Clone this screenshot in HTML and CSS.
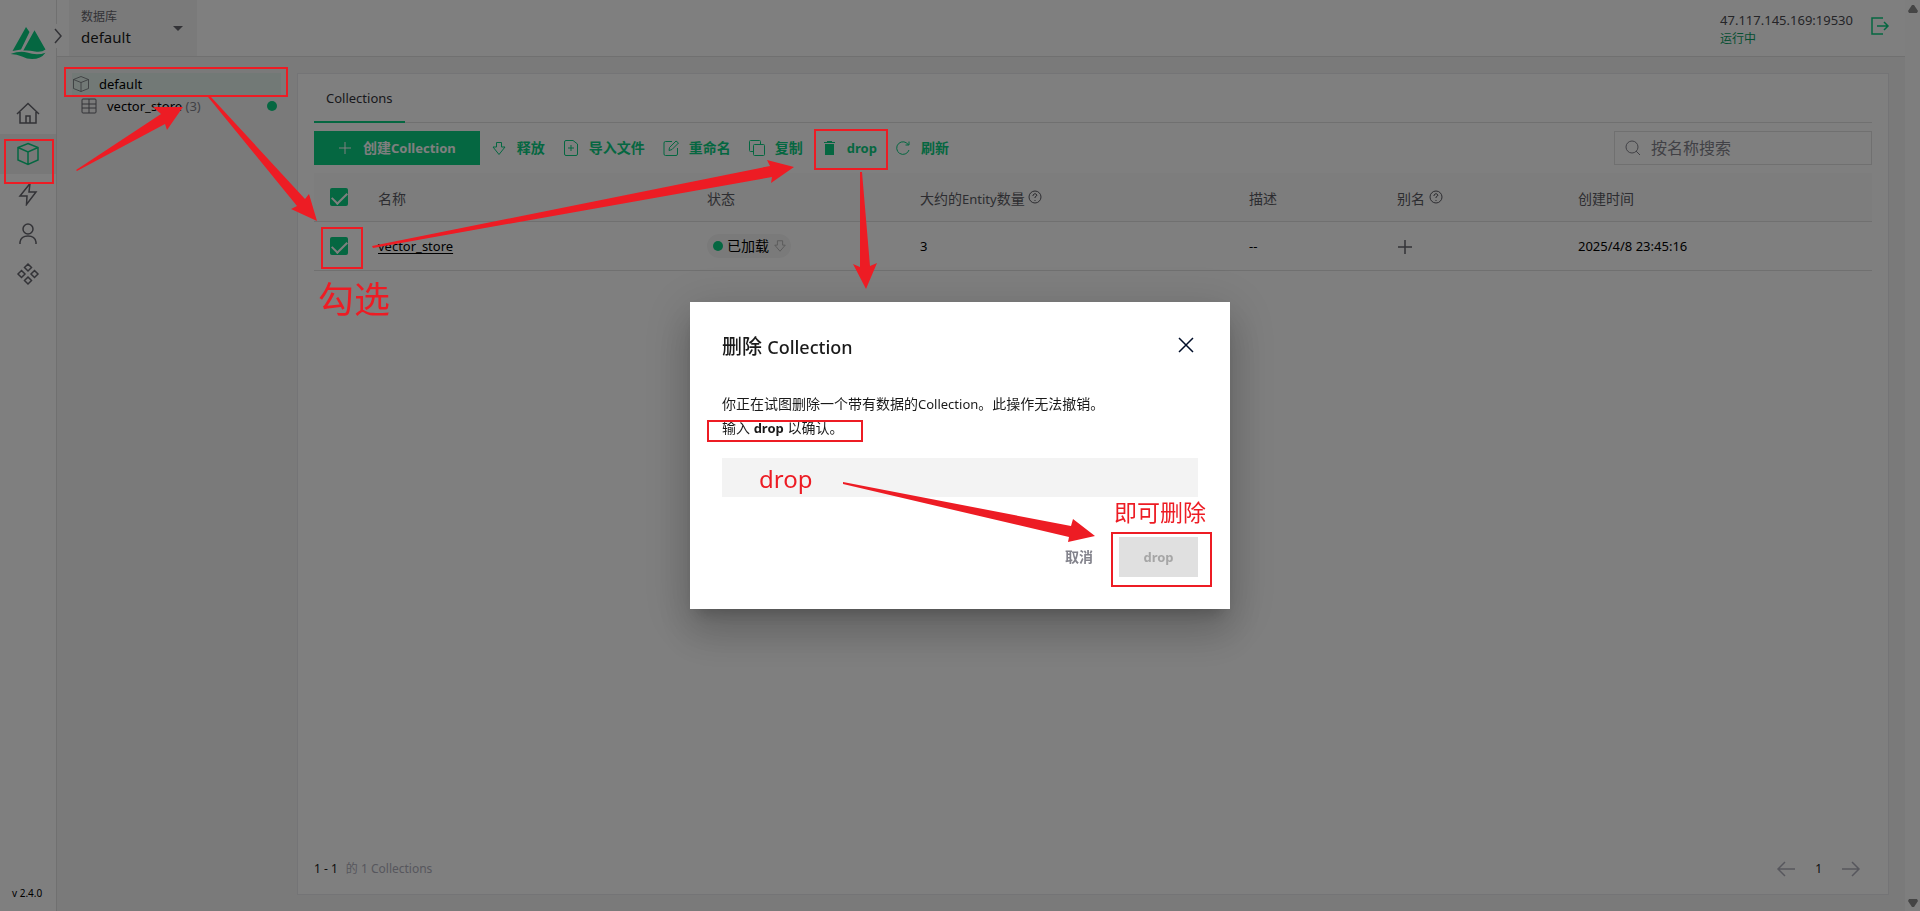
FILE: index.html
```html
<!DOCTYPE html>
<html lang="zh-CN">
<head>
  <meta charset="UTF-8" />
  <meta name="viewport" content="width=device-width, initial-scale=1.0"/>
  <title>Attu - Collections</title>
  <link rel="stylesheet" href="styles.css">
</head>
<body>

  <div class="app">
    <nav class="sidebar">
      <a href="#" class="logo" aria-label="Attu">
        <svg width="36" height="34" viewBox="0 0 36 34"><path d="M16 1 19.500 6 11 23.500Q7 24 2.500 25ZM24.500 4.300 35.500 23.500Q32 26.500 25 25.500 19 24 13.300 24.500ZM.5 28Q10 24.500 17 26.500 27 30 35.500 26.700 31 33 22 33 17 33 12 30.500 7 28 .5 28Z"/></svg>
      </a>
      <button type="button" class="expand" aria-label="展开"><svg width="8" height="16" viewBox="0 0 8 16"><path d="M1 1 7 8 1 15"/></svg></button>
      <a href="#" class="nav-item" aria-label="主页"><svg width="24" height="24" viewBox="0 0 24 24"><path d="M1 12 12 1.500 23 12M4 10V21H20V10M10 21V14H14V21"/></svg></a>
      <a href="#" class="nav-item active" aria-label="数据库"><svg width="24" height="24" viewBox="0 0 24 24"><path d="M12 1.500 22 5.500V18L12 22.500 2 18V5.500ZM2 5.500 12 10 22 5.500M12 10V22"/></svg></a>
      <a href="#" class="nav-item" aria-label="搜索"><svg width="24" height="24" viewBox="0 0 24 24"><path d="M14 1.500 4 14H11L10.500 22.500 20 10H13Z"/></svg></a>
      <a href="#" class="nav-item" aria-label="用户"><svg width="24" height="24" viewBox="0 0 24 24"><circle cx="12" cy="7" r="5"/><path d="M4 22V20Q5 14 12 14 19 14 20 20V22"/></svg></a>
      <a href="#" class="nav-item" aria-label="系统"><svg width="24" height="24" viewBox="0 0 24 24"><path d="M12 2 15.500 5.500 12 9 8.500 5.500ZM12 15 15.500 18.500 12 22 8.500 18.500ZM5.500 8.500 9 12 5.500 15.500 2 12ZM18.500 8.500 22 12 18.500 15.500 15 12Z"/></svg></a>
      <span class="version">v 2.4.0</span>
    </nav>

    <div class="page">
      <header class="header">
        <div class="db-select">
          <label for="db">数据库</label>
          <select id="db"><option>default</option></select>
          <svg class="caret" width="10" height="5" viewBox="0 0 10 5"><path d="M0 0H10L5 5Z"/></svg>
        </div>
        <div class="connection">
          <div class="address">47.117.145.169:19530</div>
          <div class="running">运行中</div>
        </div>
        <button type="button" class="logout" aria-label="退出"><svg width="20" height="20" viewBox="0 0 20 20"><path d="M13 2H2V18H13M7 10H18M14 6 18 10 14 14"/></svg></button>
      </header>

      <div class="content">
        <aside class="tree">
          <a href="#" class="tree-row selected"><svg width="18" height="18" viewBox="0 0 24 24"><path d="M12 2 22 6V18L12 22 2 18V6ZM2 6 12 10 22 6M12 10V22"/></svg><span>default</span></a>
          <a href="#" class="tree-row child"><svg width="18" height="18" viewBox="0 0 18 18"><rect x="2" y="2" width="14" height="14" rx="1"/><path d="M2 7H16M2 11H16M9 2V16"/></svg><span>vector_store <span class="count">(3)</span></span><i class="dot"></i></a>
        </aside>

        <main class="panel">
          <div class="tabs"><button type="button" class="tab">Collections</button></div>

          <div class="toolbar">
            <button type="button" class="create"><svg width="14" height="14" viewBox="0 0 14 14"><path d="M1 7H13M7 1V13"/></svg>创建<span class="en">Collection</span></button>
            <button type="button" class="tool"><svg width="16" height="16" viewBox="0 0 16 16"><path d="M5.500 2.500H10.500V7H14L8 14.500 2 7H5.500Z"/></svg>释放</button>
            <button type="button" class="tool"><svg width="16" height="16" viewBox="0 0 16 16"><path d="M3 .5H10L14.500 4V14Q14.500 15.500 13 15.500H3Q1.500 15.500 1.500 14V2Q1.500 .5 3 .5ZM8 5V11M5 8H11"/></svg>导入文件</button>
            <button type="button" class="tool"><svg width="16" height="16" viewBox="0 0 16 16"><path d="M9 1.500H2.500Q1 1.500 1 3V14Q1 15.500 2.500 15.500H13Q14.500 15.500 14.500 14V8M6 10.500 6.500 7.500 13 1 15.500 3 9 9.500Z"/></svg>重命名</button>
            <button type="button" class="tool"><svg width="16" height="16" viewBox="0 0 16 16"><rect x="4.500" y="4.500" width="11" height="11" rx="1"/><path d="M4 11.500H1.500Q.5 11.500 .5 10.500V1.500Q.5 .5 1.500 .5H10.500Q11.500 .5 11.500 1.500V4"/></svg>复制</button>
            <button type="button" class="tool"><svg width="16" height="16" viewBox="0 0 16 16"><path class="solid" d="M4 4H13V15H4ZM3 2H6V1H11V2H14V3H3Z"/></svg><span class="en">drop</span></button>
            <button type="button" class="tool"><svg width="16" height="16" viewBox="0 0 16 16"><path d="M13.500 5A6.300 6.300 0 1 0 14 10M14 1.500V5H10.500"/></svg>刷新</button>
            <div class="search">
              <svg width="16" height="16" viewBox="0 0 16 16"><circle cx="7" cy="7" r="6"/><path d="M11 11 15 15"/></svg>
              <input type="text" aria-label="按名称搜索" placeholder="按名称搜索">
            </div>
          </div>

          <table>
            <colgroup><col class="c-check"><col class="c-wide"><col class="c-status"><col class="c-wide"><col class="c-alias"><col class="c-desc"><col></colgroup>
            <thead>
              <tr>
                <th><input type="checkbox" class="check" aria-label="全选" checked></th>
                <th>名称</th>
                <th>状态</th>
                <th>大约的<span class="en">Entity</span>数量 <svg class="help" width="14" height="14" viewBox="0 0 14 14"><circle cx="7" cy="7" r="6"/><path d="M5 6V5Q7 2 9 5 9 6 7 7V8M7 10V11"/></svg></th>
                <th>描述</th>
                <th>别名 <svg class="help" width="14" height="14" viewBox="0 0 14 14"><circle cx="7" cy="7" r="6"/><path d="M5 6V5Q7 2 9 5 9 6 7 7V8M7 10V11"/></svg></th>
                <th>创建时间</th>
              </tr>
            </thead>
            <tbody>
              <tr>
                <td><input type="checkbox" class="check" aria-label="vector_store" checked></td>
                <td><a href="#" class="name">vector_store</a></td>
                <td><span class="status"><i class="dot"></i>已加载<svg width="14" height="14" viewBox="0 0 16 16"><path d="M5 2H11V7H14L8 14 2 7H5Z"/></svg></span></td>
                <td>3</td>
                <td>--</td>
                <td><button type="button" class="add" aria-label="添加别名"><svg width="16" height="16" viewBox="0 0 16 16"><path d="M1 9H15M8 2V16"/></svg></button></td>
                <td>2025/4/8 23:45:16</td>
              </tr>
            </tbody>
          </table>

          <footer class="pager">
            <span>1 - 1</span>
            <span class="total">的 1 Collections</span>
            <button type="button" class="prev" aria-label="上一页"><svg width="20" height="16" viewBox="0 0 20 16"><path d="M19 8H2M9 1 2 8 9 15"/></svg></button>
            <span>1</span>
            <button type="button" aria-label="下一页"><svg width="20" height="16" viewBox="0 0 20 16"><path d="M1 8H18M11 1 18 8 11 15"/></svg></button>
          </footer>
        </main>
      </div>
    </div>

    <div class="scrollbar">
      <svg width="10" height="8" viewBox="0 0 10 8"><path d="M4 0H6L10 6 9 8H1L0 6Z"/></svg>
      <svg width="10" height="8" viewBox="0 0 10 8"><path d="M4 8H6L10 2 9 0H1L0 2Z"/></svg>
    </div>
  </div>

  <div class="backdrop">
    <form class="dialog" role="dialog" aria-labelledby="dialogTitle">
      <div class="dialog-head">
        <h2 id="dialogTitle">删除 <span class="en">Collection</span></h2>
        <button type="button" class="close" aria-label="关闭"><svg width="16" height="16" viewBox="0 0 16 16"><path d="M1 1 15 15M15 1 1 15"/></svg></button>
      </div>
      <p>你正在试图删除一个带有数据的<span class="en">Collection</span>。此操作无法撤销。</p>
      <label for="confirm">输入 <strong class="en">drop</strong> 以确认。</label>
      <input type="text" id="confirm">
      <div class="actions">
        <button type="button" class="cancel">取消</button>
        <button type="submit" class="submit" disabled>drop</button>
      </div>
    </form>
  </div>

  <!-- tutorial marks over the page -->
  <div class="marks">
    <svg width="1920" height="911" viewBox="0 0 1920 911">
      <g class="boxes">
        <rect x="65" y="68" width="222" height="28"/>
        <rect x="5" y="140" width="48" height="43"/>
        <rect x="322" y="228" width="40" height="40"/>
        <rect x="815" y="130" width="72" height="39"/>
        <rect x="708" y="421" width="154" height="20"/>
        <rect x="1112" y="533" width="99" height="53"/>
      </g>
      <path d="M76 170 161 114 153 107 183 107 167 130 165 124 77 171Z"/>
      <path d="M208 97 211 97 305 199 309 194 317 221 291 209 297 206Z"/>
      <path d="M372 246 770 166 767 160 794 167 771 183 772 177 373 248Z"/>
      <path d="M860 172H862L870 266 877 263 866 289 853 264 860 267Z"/>
      <path d="M843 482 1071 526 1073 519 1095 536 1068 542 1069 537 843 484Z"/>
    </svg>
    <span class="note note-check">勾选</span>
    <span class="note note-drop">drop</span>
    <span class="note note-delete">即可删除</span>
  </div>

</body>
</html>
```

FILE: styles.css
```css
* {
  box-sizing: border-box;
}

html, body {
  height: 100%;
  margin: 0;
}

body {
  font-family: "Noto Sans", "Noto Sans CJK SC", sans-serif;
  font-size: 14px;
  line-height: 20px;
  color: #1a1a1a;
  overflow: hidden;
}

button, input, select {
  font: inherit;
  color: inherit;
  border: none;
  background: none;
  padding: 0;
  margin: 0;
}

button {
  cursor: pointer;
}

a {
  color: inherit;
  text-decoration: none;
}

svg {
  fill: none;
  stroke: currentColor;
  stroke-width: 1.5;
  flex-shrink: 0;
}

.en {
  font-size: 13px;
}

.app {
  display: flex;
  height: 100%;
}

/* sidebar */
.sidebar {
  width: 57px;
  border-right: 1px solid #e0e0e0;
  background: #fff;
  display: flex;
  flex-direction: column;
  position: relative;
  color: #66666e;
}

.logo {
  height: 94px;
  padding: 26px 0 0 10px;
}

.logo svg {
  fill: #0ace82;
  stroke: none;
}

.expand {
  position: absolute;
  right: -6px;
  top: 24px;
  width: 10px;
  height: 24px;
  background: #fff;
  display: flex;
  align-items: center;
  justify-content: flex-end;
}

.nav-item {
  height: 40px;
  display: flex;
  align-items: center;
  justify-content: center;
}

.nav-item.active {
  color: #0ace82;
  background: #f0f0f0;
}

.version {
  margin-top: auto;
  padding: 0 0 8px 12px;
  font-size: 10px;
  color: #000;
}

/* header */
.page {
  flex: 1;
  display: flex;
  flex-direction: column;
  background: #f5f5f5;
}

.header {
  height: 57px;
  border-bottom: 1px solid #e0e0e0;
  background: #fff;
  display: flex;
  padding: 0 12px;
}

.db-select {
  width: 128px;
  background: #f5f5f5;
  padding: 8px 12px;
  position: relative;
}

.db-select label {
  display: block;
  font-size: 12px;
  line-height: 18px;
  color: #66666e;
}

.db-select select {
  appearance: none;
  width: 100%;
  font-size: 15px;
  line-height: 22px;
  color: #1a1a1a;
}

.caret {
  position: absolute;
  right: 14px;
  top: 26px;
  fill: #66666e;
  stroke: none;
}

.connection {
  margin-left: auto;
  padding-top: 10px;
}

.address {
  font-size: 13px;
  color: #4a4a50;
}

.running {
  font-size: 12px;
  line-height: 18px;
  color: #0a9e65;
}

.logout {
  color: #0ace82;
  margin: 16px 3px 0 17px;
  height: 20px;
}

/* database tree */
.content {
  flex: 1;
  display: flex;
  gap: 16px;
  padding: 16px 16px 16px 15px;
}

.tree {
  width: 209px;
  font-size: 13px;
  color: #000;
}

.tree-row {
  display: flex;
  align-items: center;
  height: 22px;
  gap: 9px;
}

.tree-row svg {
  color: #66666e;
  stroke-width: 1;
}

.tree-row.selected {
  background: #e4f3ec;
}

.tree-row.child {
  padding: 0 4px 0 8px;
}

.count {
  color: #83838c;
}

.dot {
  width: 10px;
  height: 10px;
  border-radius: 50%;
  background: #0ace82;
}

.tree-row .dot {
  margin-left: auto;
}

/* panel */
.panel {
  flex: 1;
  background: #fff;
  border: 1px solid #e9e9ed;
  padding: 0 16px;
  display: flex;
  flex-direction: column;
}

.tabs {
  height: 49px;
  border-bottom: 1px solid #e0e0e0;
}

.tab {
  height: 49px;
  padding: 0 12px;
  border-bottom: 2px solid #0ace82;
  font-size: 13px;
  color: #33333a;
}

.toolbar {
  display: flex;
  align-items: center;
  margin: 8px 0;
  height: 34px;
}

.create, .tool {
  display: flex;
  align-items: center;
  height: 34px;
  font-weight: bold;
}

.create {
  background: #0ace82;
  color: #fff;
  padding: 0 24px;
  margin-right: 2px;
}

.create svg {
  margin-right: 11px;
}

.create svg, .tool svg {
  stroke-width: 1;
}

.tool {
  gap: 10px;
  padding: 0 9px;
  color: #0ace82;
}

.tool .solid {
  fill: #0ace82;
  stroke: none;
}

.search {
  margin-left: auto;
  width: 258px;
  height: 34px;
  border: 1px solid #e0e0e0;
  display: flex;
  align-items: center;
  gap: 10px;
  padding: 0 10px;
  color: #83838c;
}

.search svg {
  stroke-width: 1;
}

.search input {
  flex: 1;
  min-width: 0;
  font-size: 16px;
  outline: none;
}

.search input::placeholder {
  color: #83838c;
}

table {
  width: 100%;
  table-layout: fixed;
  border-collapse: separate;
  border-spacing: 0;
}

.c-check {
  width: 52px;
}

.c-wide {
  width: 329px;
}

.c-status {
  width: 213px;
}

.c-alias {
  width: 148px;
}

.c-desc {
  width: 181px;
}

th, td {
  height: 49px;
  padding: 0 12px;
  border-bottom: 1px solid #e0e0e0;
  text-align: left;
}

th {
  padding-top: 3px;
  background: #fafafa;
  font-weight: normal;
  color: #5a5a62;
}

th:first-child, td:first-child {
  padding: 0 16px;
}

td {
  font-size: 13px;
  color: #000;
}

.check {
  appearance: none;
  display: block;
  width: 18px;
  height: 18px;
  border-radius: 2px;
  background: #0ace82;
}

.check::after {
  content: "";
  display: block;
  width: 13px;
  height: 7px;
  margin: 0 auto;
  border: solid #fff;
  border-width: 0 0 2px 2px;
  transform: translateY(4px) rotate(-45deg);
}

.help {
  vertical-align: 0;
  stroke-width: 1;
}

.name {
  text-decoration: underline;
  text-underline-offset: 2px;
}

.status {
  display: inline-flex;
  align-items: center;
  gap: 4px;
  height: 24px;
  padding: 0 4px 0 6px;
  border-radius: 12px;
  background: #f5f5f5;
  font-size: 14px;
}

.status svg {
  color: #aeaeae;
  stroke-width: 1;
}

.add {
  display: block;
  color: #66666e;
}

.add svg {
  display: block;
}

.pager {
  margin-top: auto;
  height: 50px;
  display: flex;
  align-items: center;
  gap: 8px;
  font-size: 12px;
}

.total {
  color: #aeaebb;
}

.pager button {
  height: 16px;
  color: #aeaebb;
  margin: 0 11px;
}

.pager svg {
  display: block;
}

.pager .prev {
  margin-left: auto;
}

.scrollbar {
  width: 15px;
  background: #fcfcfc;
  display: flex;
  flex-direction: column;
  align-items: center;
  justify-content: space-between;
  padding: 5px 0 4px;
}

.scrollbar svg {
  fill: #8a8a8a;
  stroke: none;
}

/* delete dialog */
.backdrop {
  position: fixed;
  inset: 0;
  background: rgba(0, 0, 0, 0.5);
  display: flex;
  align-items: center;
  justify-content: center;
}

.dialog {
  width: 540px;
  padding: 32px;
  background: #fff;
  box-shadow: 0 11px 15px -7px rgba(0,0,0,0.2), 0 24px 38px 3px rgba(0,0,0,0.14), 0 9px 46px 8px rgba(0,0,0,0.12);
}

.dialog-head {
  display: flex;
  align-items: center;
  justify-content: space-between;
  margin-bottom: 32px;
}

h2 {
  margin: 0;
  font-size: 20px;
  line-height: 26px;
  font-weight: 500;
}

h2 .en {
  font-size: 18px;
}

.close {
  width: 24px;
  height: 24px;
  color: #010e29;
}

.dialog p, .dialog label {
  display: block;
  margin: 0;
  line-height: 24px;
}

.dialog input {
  display: block;
  width: 100%;
  height: 39px;
  margin: 18px 0 40px;
  padding: 0 12px;
  background: #f3f3f3;
}

.actions {
  display: flex;
  justify-content: flex-end;
  gap: 26px;
}

.cancel, .submit {
  font-weight: bold;
}

.cancel {
  color: #83838c;
}

.submit {
  width: 79px;
  height: 40px;
  background: #e0e0e0;
  color: #a6a6a6;
  font-size: 13px;
}

/* tutorial marks */
.marks {
  position: fixed;
  inset: 0;
  overflow: hidden;
  pointer-events: none;
  color: #ed1c24;
}

.marks svg {
  fill: #ed1c24;
  stroke: none;
}

.marks .boxes {
  fill: none;
  stroke: #ed1c24;
  stroke-width: 2;
}

.note {
  position: absolute;
  font-size: 24px;
  line-height: 36px;
}

.note-check {
  left: 318px;
  top: 282px;
  font-size: 36px;
}

.note-drop {
  left: 759px;
  top: 461px;
}

.note-delete {
  left: 1114px;
  top: 494px;
  font-size: 23px;
}
```
